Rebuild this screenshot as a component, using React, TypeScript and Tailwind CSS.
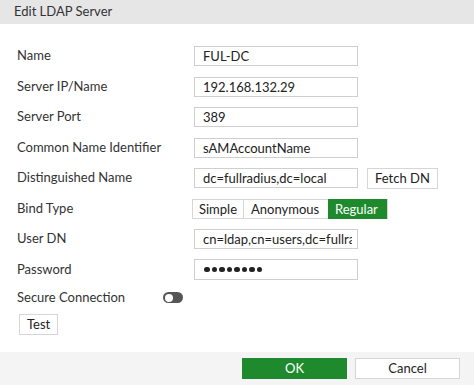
import React from "react";

const font = { fontFamily: "Lato, 'Open Sans', sans-serif" };

function Label({ children }: { children: React.ReactNode }) {
  return <div className="w-[177px] shrink-0 text-[13px] text-[#333]">{children}</div>;
}

function Field({ value }: { value: string }) {
  return (
    <div className="h-[20px] w-[164px] border border-[#cfcfcf] bg-white pl-[8px] pr-[5px] text-[13px] leading-[18px] text-[#222]">
      <div className="overflow-hidden whitespace-nowrap">{value}</div>
    </div>
  );
}

export default function App() {
  return (
    <div className="w-[474px] h-[391px] bg-white flex flex-col" style={font}>
      <div className="h-[24px] shrink-0 bg-[#e6e6e6] flex items-center pl-[14px] text-[13px] text-[#333]">
        Edit LDAP Server
      </div>
      <div className="flex flex-col pl-[17px] pt-[22px] gap-[10.5px]">
        <div className="flex items-center h-[20px]">
          <Label>Name</Label>
          <Field value="FUL-DC" />
        </div>
        <div className="flex items-center h-[20px]">
          <Label>Server IP/Name</Label>
          <Field value="192.168.132.29" />
        </div>
        <div className="flex items-center h-[20px]">
          <Label>Server Port</Label>
          <Field value="389" />
        </div>
        <div className="flex items-center h-[20px]">
          <Label>Common Name Identifier</Label>
          <Field value="sAMAccountName" />
        </div>
        <div className="flex items-center h-[20px]">
          <Label>Distinguished Name</Label>
          <Field value="dc=fullradius,dc=local" />
          <div className="ml-[9px] h-[21px] border border-[#d6d6d6] px-[7px] text-[13px] leading-[19px] text-[#222]">
            Fetch DN
          </div>
        </div>
        <div className="flex items-center h-[20px]">
          <Label>Bind Type</Label>
          <div className="-ml-[2px] flex h-[20px] border border-[#d6d6d6] text-[13px] leading-[18px] text-[#222]">
            <div className="w-[51px] px-[6px] border-r border-[#d6d6d6]">Simple</div>
            <div className="w-[84px] px-[7px]">Anonymous</div>
            <div className="w-[59px] -my-px h-[20px] leading-[20px] px-[7px] bg-[#1e8a2d] text-white">Regular</div>
          </div>
        </div>
        <div className="flex items-center h-[20px]">
          <Label>User DN</Label>
          <Field value="cn=ldap,cn=users,dc=fullradius,dc=local" />
        </div>
        <div className="flex items-center h-[20px]">
          <Label>Password</Label>
          <div className="h-[21px] w-[164px] border border-[#cfcfcf] bg-white pl-[9px] flex items-center gap-[2px]">
            {Array.from({ length: 8 }).map((_, i) => (
              <div key={i} className="w-[5.5px] h-[5.5px] rounded-full bg-[#222]" />
            ))}
          </div>
        </div>
      </div>
      <div className="flex items-center pl-[17px] mt-[11px] h-[14px]">
        <div className="w-[146px] text-[13px] text-[#333]">Secure Connection</div>
        <div className="w-[20px] h-[11px] rounded-full bg-[#555] relative">
          <div className="absolute left-[1.5px] top-[1.5px] w-[8px] h-[8px] rounded-full bg-white" />
        </div>
      </div>
      <div className="flex pl-[19px] mt-[9px] h-[21px]">
        <div className="h-[21px] border border-[#d6d6d6] px-[7px] text-[13px] leading-[19px] text-[#222]">
          Test
        </div>
      </div>
      <div className="mt-[17px] h-[33px] shrink-0 bg-[#f4f4f4] flex justify-end items-start pt-[6px] pr-[14px] gap-[8px]">
        <div className="w-[105px] h-[21px] bg-[#1e8a2d] text-white text-[13px] leading-[21px] text-center">OK</div>
        <div className="w-[105px] h-[21px] bg-white border border-[#d6d6d6] text-[#222] text-[13px] leading-[19px] text-center">
          Cancel
        </div>
      </div>
    </div>
  );
}
